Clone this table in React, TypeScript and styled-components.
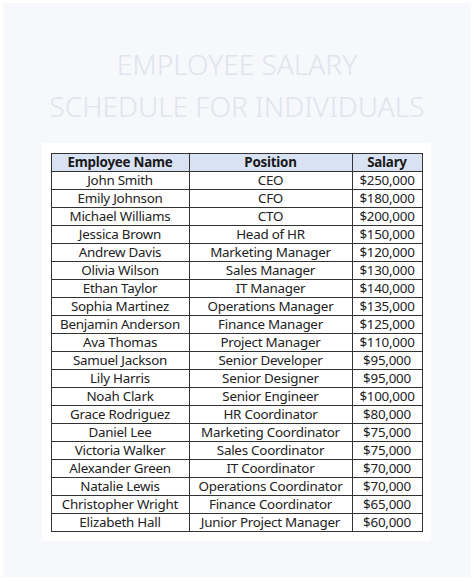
import { createGlobalStyle, styled } from 'styled-components'

const rows = [
  ['John Smith', 'CEO', '$250,000'],
  ['Emily Johnson', 'CFO', '$180,000'],
  ['Michael Williams', 'CTO', '$200,000'],
  ['Jessica Brown', 'Head of HR', '$150,000'],
  ['Andrew Davis', 'Marketing Manager', '$120,000'],
  ['Olivia Wilson', 'Sales Manager', '$130,000'],
  ['Ethan Taylor', 'IT Manager', '$140,000'],
  ['Sophia Martinez', 'Operations Manager', '$135,000'],
  ['Benjamin Anderson', 'Finance Manager', '$125,000'],
  ['Ava Thomas', 'Project Manager', '$110,000'],
  ['Samuel Jackson', 'Senior Developer', '$95,000'],
  ['Lily Harris', 'Senior Designer', '$95,000'],
  ['Noah Clark', 'Senior Engineer', '$100,000'],
  ['Grace Rodriguez', 'HR Coordinator', '$80,000'],
  ['Daniel Lee', 'Marketing Coordinator', '$75,000'],
  ['Victoria Walker', 'Sales Coordinator', '$75,000'],
  ['Alexander Green', 'IT Coordinator', '$70,000'],
  ['Natalie Lewis', 'Operations Coordinator', '$70,000'],
  ['Christopher Wright', 'Finance Coordinator', '$65,000'],
  ['Elizabeth Hall', 'Junior Project Manager', '$60,000'],
]

const GlobalStyle = createGlobalStyle`
  body {
    margin: 0;
    background: #ffffff;
    font-family: "Noto Sans", "Liberation Sans", sans-serif;
  }
`

const App = () => {
  return (
    <>
      <GlobalStyle />
      <Page>
        <Title>
          EMPLOYEE SALARY
          <br />
          SCHEDULE FOR INDIVIDUALS
        </Title>
        <Card>
          <Table>
            <colgroup>
              <col style={{ width: 138 }} />
              <col style={{ width: 163 }} />
              <col style={{ width: 70 }} />
            </colgroup>
            <thead>
              <tr>
                <HeadCell>Employee Name</HeadCell>
                <HeadCell>Position</HeadCell>
                <HeadCell>Salary</HeadCell>
              </tr>
            </thead>
            <tbody>
              {rows.map(([name, position, salary]) => (
                <tr key={name}>
                  <Cell>{name}</Cell>
                  <Cell>{position}</Cell>
                  <Cell>{salary}</Cell>
                </tr>
              ))}
            </tbody>
          </Table>
        </Card>
      </Page>
    </>
  )
}

const Page = styled.div`
  margin: 3px;
  height: 574px;
  background: #f7f8fc;
  display: flex;
  flex-direction: column;
  align-items: center;
  overflow: hidden;
`
const Title = styled.h1`
  margin: 40px 0 0;
  font-family: "Noto Sans", sans-serif;
  font-weight: 300;
  font-size: 28px;
  line-height: 42px;
  color: #e0e4ec;
  text-align: center;
  letter-spacing: 0;
`
const Card = styled.div`
  margin-top: 16px;
  margin-left: -2px;
  width: 371px;
  padding: 10px 9px 9px;
  background: #ffffff;
`
const Table = styled.table`
  width: 371px;
  border-collapse: collapse;
  table-layout: fixed;
  font-family: "Noto Sans", sans-serif;
  font-size: 13.4px;
  letter-spacing: -0.25px;
  color: #222222;
`
const HeadCell = styled.th`
  height: 17px;
  padding: 0;
  border: 1px solid #333333;
  background: #d9e2f3;
  font-weight: 700;
  line-height: 17px;
  text-align: center;
  color: #1a1a1a;
`
const Cell = styled.td`
  height: 17px;
  padding: 0;
  border: 1px solid #333333;
  line-height: 17px;
  text-align: center;
  white-space: nowrap;
  overflow: hidden;
`

export default App
